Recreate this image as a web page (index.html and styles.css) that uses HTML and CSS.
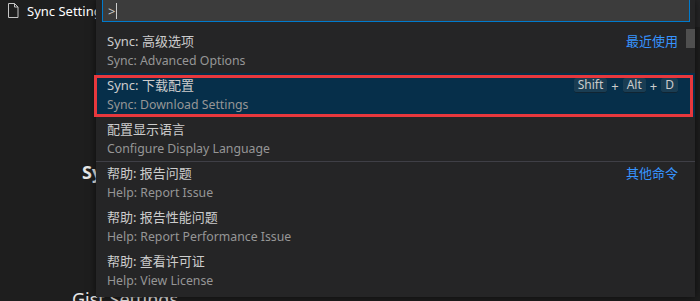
FILE: index.html
```html
<!DOCTYPE html>
<html lang="zh-CN">
	<head>
		<meta charset="UTF-8" />
		<title>Sync Settings</title>
		<link rel="stylesheet" href="styles.css">
	</head>
	<body>
		<div class="tabs">
			<div class="tab">
				<svg class="tab-icon" width="12" height="15" viewBox="0 0 12 15">
					<path d="M1.5 0.5h6l3.5 3.5v10.5h-9.5z M7.5 0.5v3.5h3.5" fill="none" stroke="#c5c5c5" stroke-width="1" />
				</svg>
				<span class="tab-title">Sync Settings</span>
			</div>
		</div>
		<div class="editor">
			<h2 class="page-title">Sync Settings</h2>
			<div class="section-title">Gist Settings</div>
		</div>

		<div class="quick-input">
			<div class="input-box">
				<span class="prompt">&gt;</span><span class="caret"></span>
			</div>
			<div class="list">
				<div class="row">
					<div class="row-top">
						<span class="label">Sync: 高级选项</span>
						<span class="hint">最近使用</span>
					</div>
					<div class="detail">Sync: Advanced Options</div>
				</div>
				<div class="row selected">
					<div class="row-top">
						<span class="label">Sync: 下载配置</span>
						<span class="keys">
							<kbd>Shift</kbd><span class="plus">+</span><kbd>Alt</kbd><span class="plus">+</span><kbd>D</kbd>
						</span>
					</div>
					<div class="detail">Sync: Download Settings</div>
					<div class="mark"></div>
				</div>
				<div class="row">
					<div class="row-top">
						<span class="label">配置显示语言</span>
					</div>
					<div class="detail">Configure Display Language</div>
				</div>
				<div class="row group">
					<div class="row-top">
						<span class="label">帮助: 报告问题</span>
						<span class="hint">其他命令</span>
					</div>
					<div class="detail">Help: Report Issue</div>
				</div>
				<div class="row">
					<div class="row-top">
						<span class="label">帮助: 报告性能问题</span>
					</div>
					<div class="detail">Help: Report Performance Issue</div>
				</div>
				<div class="row">
					<div class="row-top">
						<span class="label">帮助: 查看许可证</span>
					</div>
					<div class="detail">Help: View License</div>
				</div>
				<div class="scroll-thumb"></div>
			</div>
		</div>
	</body>
</html>
```

FILE: styles.css
```css
body {
	margin: 0;
	width: 700px;
	height: 301px;
	overflow: hidden;
	background: #1e1e1e;
	font-family: 'Noto Sans', 'Noto Sans CJK SC', sans-serif;
	color: #cccccc;
	position: relative;
}
.tabs {
	height: 27px;
	background: #252526;
	display: flex;
}
.tab {
	display: flex;
	align-items: center;
	gap: 8px;
	padding: 0 0 6px 7px;
	background: #1e1e1e;
	width: 160px;
	font-size: 13px;
	color: #ffffff;
	white-space: nowrap;
}
.tab-icon {
	flex: none;
}
.editor {
	padding: 0 0 0 72px;
}
.page-title {
	margin: 126px 0 0 10px;
	font-size: 18px;
	font-weight: bold;
	color: #e7e7e7;
	line-height: 38px;
}
.section-title {
	margin-top: 96px;
	font-size: 18px;
	color: #e7e7e7;
}

/* command palette */
.quick-input {
	position: absolute;
	left: 96px;
	top: 0;
	width: 599px;
	height: 297px;
	background: #252526;
	box-shadow: 0 0 8px rgba(0, 0, 0, 0.6);
}
.input-box {
	margin: 0 5px 0 6px;
	height: 22px;
	box-sizing: border-box;
	border: 1px solid #007acc;
	border-top: none;
	background: #3c3c3c;
	display: flex;
	align-items: center;
	padding-left: 5px;
	font-size: 13px;
}
.caret {
	display: inline-block;
	width: 1px;
	height: 16px;
	background: #cccccc;
	margin-left: 1px;
}
.list {
	position: relative;
	margin-top: 7px;
}
.row {
	position: relative;
	height: 44px;
	box-sizing: border-box;
	padding: 1px 17px 0 11px;
	font-size: 13px;
}
.row.group {
	border-top: 1px solid #3f3f46;
	padding-top: 0;
}
.row.selected {
	background: #062f4a;
}
.row-top {
	display: flex;
	justify-content: space-between;
	align-items: center;
	height: 21px;
}
.label {
	color: #cccccc;
}
.detail {
	line-height: 20px;
	height: 20px;
	font-size: 12.3px;
	color: #969696;
}
.hint {
	color: #3794ff;
}
.keys {
	display: flex;
	align-items: center;
	padding-top: 2px;
}
kbd {
	font-family: 'Noto Sans', sans-serif;
	font-size: 12px;
	line-height: 14px;
	padding: 0 4px;
	border-radius: 3px;
	background: rgba(128, 128, 128, 0.17);
	border-bottom: 1px solid rgba(0, 0, 0, 0.4);
	color: #cccccc;
}
.plus {
	margin: 0 4px;
	font-size: 13px;
	color: #cccccc;
}
.mark {
	position: absolute;
	left: -2px;
	right: 2px;
	top: 2px;
	bottom: 0;
	border: 3px solid #e8383d;
	pointer-events: none;
}
.scroll-thumb {
	position: absolute;
	right: 0;
	top: 0;
	width: 9px;
	height: 19px;
	background: #4f4f4f;
}
```
